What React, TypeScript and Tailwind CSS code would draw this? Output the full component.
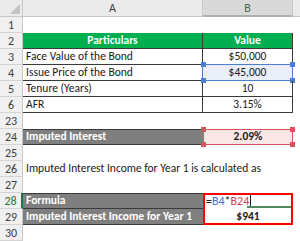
import React from "react";

const font = { fontFamily: "Carlito, Lato, 'Liberation Sans', sans-serif" };

function RowHead({ n, active }: { n: string; active?: boolean }) {
  return (
    <div
      className={
        "w-[23px] shrink-0 h-full flex items-center justify-center text-[12px] bg-[#f0f0f0] border-b border-[#d4d4d4] " +
        (active ? "text-[#217346] border-r-2 border-r-[#217346]" : "text-[#404040] border-r border-r-[#c8c8c8]")
      }
    >
      {n}
    </div>
  );
}

function Corner({ q }: { q: string }) {
  return <span className={"absolute w-[5px] h-[5px] " + q} />;
}

export default function App() {
  return (
    <div className="w-[300px] h-[241px] overflow-hidden bg-white text-[11.5px] text-[#1a1a1a]" style={font}>
      {/* column header */}
      <div className="flex h-[17px]">
        <div className="w-[23px] shrink-0 relative bg-[#ebebeb] border-r border-b border-[#c8c8c8]">
          <svg className="absolute right-[2px] bottom-[2px]" width="10" height="10" viewBox="0 0 10 10">
            <polygon points="10,0 10,10 0,10" fill="#c2c2c2" />
          </svg>
        </div>
        <div className="w-[180px] shrink-0 flex items-center justify-center bg-[#ebebeb] border-r border-b border-[#c8c8c8] text-[#404040] text-[12px]">
          A
        </div>
        <div className="w-[90px] shrink-0 flex items-center justify-center bg-[#d9d9d9] border-r border-[#c8c8c8] border-b-2 border-b-[#a8b3ab] text-[#3e6b50] text-[12px]">
          B
        </div>
        <div className="flex-1 bg-[#ebebeb] border-b border-[#c8c8c8]" />
      </div>

      {/* row 1 */}
      <div className="flex h-[16px]">
        <RowHead n="1" />
        <div className="flex-1" />
      </div>

      {/* row 2 */}
      <div className="flex h-[16px]">
        <RowHead n="2" />
        <div className="w-[180px] shrink-0 bg-[#00b050] text-white font-bold flex items-center justify-center border-r border-b border-[#3a3a3a]">
          Particulars
        </div>
        <div className="w-[90px] shrink-0 bg-[#00b050] text-white font-bold flex items-center justify-center border-r border-b border-[#3a3a3a]">
          Value
        </div>
        <div className="flex-1" />
      </div>

      {/* rows 3-6 */}
      {[
        ["3", "Face Value of the Bond", "$50,000"],
        ["4", "Issue Price of the Bond", "$45,000"],
        ["5", "Tenure (Years)", "10"],
        ["6", "AFR", "3.15%"],
      ].map(([n, a, b]) => (
        <div key={n} className="flex h-[16px]">
          <RowHead n={n} />
          <div className="w-[180px] shrink-0 flex items-center pl-[3px] border-r border-b border-[#3a3a3a]">{a}</div>
          <div
            className={
              "w-[90px] shrink-0 flex items-center justify-center border-r border-b border-[#3a3a3a] relative " +
              (n === "4" ? "bg-[#e9eef8]" : "")
            }
          >
            {b}
            {n === "4" && (
              <>
                <span className="absolute left-[-1px] top-[-1px] right-[-1px] bottom-[-1px] border border-[#4d7fd0]" />
                <Corner q="bg-[#4d7fd0] left-[-2px] top-[-3px]" />
                <Corner q="bg-[#4d7fd0] right-[-3px] top-[-3px]" />
                <Corner q="bg-[#4d7fd0] left-[-2px] bottom-[-3px]" />
                <Corner q="bg-[#4d7fd0] right-[-3px] bottom-[-3px]" />
              </>
            )}
          </div>
          <div className="flex-1" />
        </div>
      ))}

      {/* row 23 */}
      <div className="flex h-[16px]">
        <RowHead n="23" />
        <div className="flex-1" />
      </div>

      {/* row 24 */}
      <div className="flex h-[16px]">
        <RowHead n="24" />
        <div className="w-[180px] shrink-0 bg-[#7f7f7f] text-white font-bold flex items-center pl-[3px] border-y border-[#3a3a3a]">
          Imputed Interest
        </div>
        <div className="w-[90px] shrink-0 relative bg-[#fbe6e6] font-bold flex items-center justify-center">
          2.09%
          <span className="absolute inset-0 border border-[#d9535f]" />
          <Corner q="bg-[#d9535f] left-[-2px] top-[-2px]" />
          <Corner q="bg-[#d9535f] right-[-2px] top-[-2px]" />
          <Corner q="bg-[#d9535f] left-[-2px] bottom-[-2px]" />
          <Corner q="bg-[#d9535f] right-[-2px] bottom-[-2px]" />
        </div>
        <div className="flex-1" />
      </div>

      {/* row 25 */}
      <div className="flex h-[16px]">
        <RowHead n="25" />
        <div className="flex-1" />
      </div>

      {/* row 26 */}
      <div className="flex h-[16px]">
        <RowHead n="26" />
        <div className="flex-1 flex items-center pl-[3px] whitespace-nowrap">
          Imputed Interest Income for Year 1 is calculated as
        </div>
      </div>

      {/* row 27 */}
      <div className="flex h-[16px]">
        <RowHead n="27" />
        <div className="flex-1" />
      </div>

      {/* row 28 */}
      <div className="flex h-[16px]">
        <RowHead n="28" active />
        <div className="w-[180px] shrink-0 bg-[#7f7f7f] text-white font-bold flex items-center pl-[3px] border-y border-[#3a3a3a]">
          Formula
        </div>
        <div className="w-[90px] shrink-0 relative flex items-center pl-[3px] text-[12px]">
          <span className="text-[#1a1a1a]">=</span>
          <span className="text-[#3d6fd0]">B4</span>
          <span className="text-[#1a1a1a]">*</span>
          <span className="text-[#d0404a]">B24</span>
          <span className="w-px h-[12px] bg-[#1a1a1a] ml-[1px]" />
          <span className="absolute left-[44px] right-[2px] bottom-[1px] h-[2px] bg-[#4f8a63]" />
          <span className="absolute left-0 right-0 top-0 h-[2px] bg-[#ff0000]" />
          <span className="absolute left-0 top-0 bottom-0 w-[2px] bg-[#ff0000]" />
          <span className="absolute right-0 top-0 bottom-0 w-[2px] bg-[#ff0000]" />
        </div>
        <div className="flex-1" />
      </div>

      {/* row 29 */}
      <div className="flex h-[16px]">
        <RowHead n="29" />
        <div className="w-[180px] shrink-0 bg-[#7f7f7f] text-white font-bold flex items-center pl-[3px] border-b border-[#3a3a3a] whitespace-nowrap overflow-hidden">
          Imputed Interest Income for Year 1
        </div>
        <div className="w-[90px] shrink-0 relative font-bold flex items-center justify-center">
          $941
          <span className="absolute left-0 top-0 bottom-0 w-[2px] bg-[#ff0000]" />
          <span className="absolute right-0 top-0 bottom-0 w-[2px] bg-[#ff0000]" />
          <span className="absolute left-0 right-0 bottom-0 h-[2px] bg-[#ff0000]" />
        </div>
        <div className="flex-1" />
      </div>

      {/* row 30 */}
      <div className="flex h-[16px]">
        <RowHead n="30" />
        <div className="flex-1" />
      </div>
    </div>
  );
}
